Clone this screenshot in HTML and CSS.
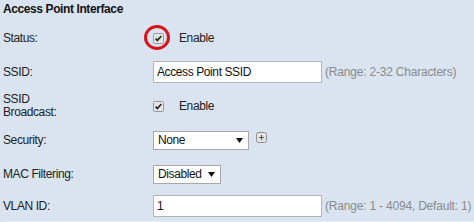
FILE: index.html
```html
<!DOCTYPE html>
<html lang="en">
<head>
    <meta charset="UTF-8">
    <title>Access Point Interface</title>
    <link rel="stylesheet" href="styles.css">
</head>
<body>

    <div class="panel">
        <h2 class="title">Access Point Interface</h2>

        <div class="row">
            <div class="label">Status:</div>
            <div class="field">
                <span class="check">
                    <svg width="11" height="11" viewBox="0 0 11 11">
                        <rect x="0.5" y="0.5" width="10" height="10" rx="1" fill="#e6e6e6" stroke="#9a9a9a"/>
                        <path d="M2.6 5.6 L4.4 7.6 L8.3 3" fill="none" stroke="#222" stroke-width="1.6"/>
                    </svg>
                    <span class="ring"></span>
                </span>
                <span class="check-text">Enable</span>
            </div>
        </div>

        <div class="row">
            <div class="label">SSID:</div>
            <div class="field">
                <input type="text" class="text-input" value="Access Point SSID">
                <span class="hint">(Range: 2-32 Characters)</span>
            </div>
        </div>

        <div class="row">
            <div class="label">SSID<br>Broadcast:</div>
            <div class="field">
                <span class="check">
                    <svg width="11" height="11" viewBox="0 0 11 11">
                        <rect x="0.5" y="0.5" width="10" height="10" rx="1" fill="#e6e6e6" stroke="#9a9a9a"/>
                        <path d="M2.6 5.6 L4.4 7.6 L8.3 3" fill="none" stroke="#222" stroke-width="1.6"/>
                    </svg>
                </span>
                <span class="check-text">Enable</span>
            </div>
        </div>

        <div class="row">
            <div class="label">Security:</div>
            <div class="field">
                <span class="select select-wide">
                    <span>None</span>
                    <svg class="arrow" width="7" height="5" viewBox="0 0 7 5"><path d="M0 0 H7 L3.5 5 Z" fill="#111"/></svg>
                </span>
                <span class="plus">
                    <svg width="11" height="11" viewBox="0 0 11 11">
                        <rect x="0.5" y="0.5" width="10" height="10" rx="2" fill="#e4e4e4" stroke="#8e8e8e"/>
                        <path d="M5.5 3 V8 M3 5.5 H8" stroke="#555" stroke-width="1"/>
                    </svg>
                </span>
            </div>
        </div>

        <div class="row">
            <div class="label">MAC Filtering:</div>
            <div class="field">
                <span class="select">
                    <span>Disabled</span>
                    <svg class="arrow" width="7" height="5" viewBox="0 0 7 5"><path d="M0 0 H7 L3.5 5 Z" fill="#111"/></svg>
                </span>
            </div>
        </div>

        <div class="row row-last">
            <div class="label">VLAN ID:</div>
            <div class="field">
                <input type="text" class="text-input" value="1">
                <span class="hint">(Range: 1 - 4094, Default: 1)</span>
            </div>
        </div>
    </div>

</body>
</html>
```

FILE: styles.css
```css
body {
    margin: 0;
    background-color: #dae4f0;
    font-family: "Liberation Sans", Arial, sans-serif;
    font-size: 12px;
    letter-spacing: -0.4px;
    color: #222;
}

.panel {
    width: 474px;
    height: 222px;
    padding-left: 3px;
    box-sizing: border-box;
    overflow: hidden;
}

.title {
    margin: 0 0 3px 0;
    font-size: 12px;
    font-weight: bold;
    line-height: 18px;
    color: #111;
}

.row {
    display: flex;
    align-items: center;
    height: 34px;
}

.row-last {
    height: 30px;
    border-bottom: 1px solid #e8eef6;
}

.label {
    width: 150px;
    flex-shrink: 0;
    line-height: 13px;
}

.field {
    display: flex;
    align-items: center;
}

.check {
    position: relative;
    display: inline-block;
    width: 11px;
    height: 11px;
}

.check svg {
    display: block;
}

.ring {
    position: absolute;
    left: -9px;
    top: -8px;
    width: 26px;
    height: 25px;
    box-sizing: border-box;
    border: 3px solid #d8141c;
    border-radius: 50%;
}

.check-text {
    margin-left: 15px;
}

.text-input {
    width: 169px;
    height: 22px;
    box-sizing: border-box;
    margin: 0;
    padding: 0 3px;
    border: 1px solid #b5b5b5;
    background: #fff;
    font-family: "Liberation Sans", Arial, sans-serif;
    font-size: 12px;
    letter-spacing: -0.4px;
    color: #111;
}

.hint {
    margin-left: 3px;
    color: #8a8a8a;
    letter-spacing: -0.2px;
}

.select {
    display: inline-flex;
    align-items: center;
    justify-content: space-between;
    gap: 6px;
    height: 19px;
    box-sizing: border-box;
    padding: 0 5px 0 4px;
    border: 1px solid #a8a8a8;
    background: #fff;
    color: #111;
}

.select-wide {
    width: 96px;
}

.arrow {
    display: block;
}

.plus {
    margin-left: 7px;
    margin-top: -6px;
}

.plus svg {
    display: block;
}
```
